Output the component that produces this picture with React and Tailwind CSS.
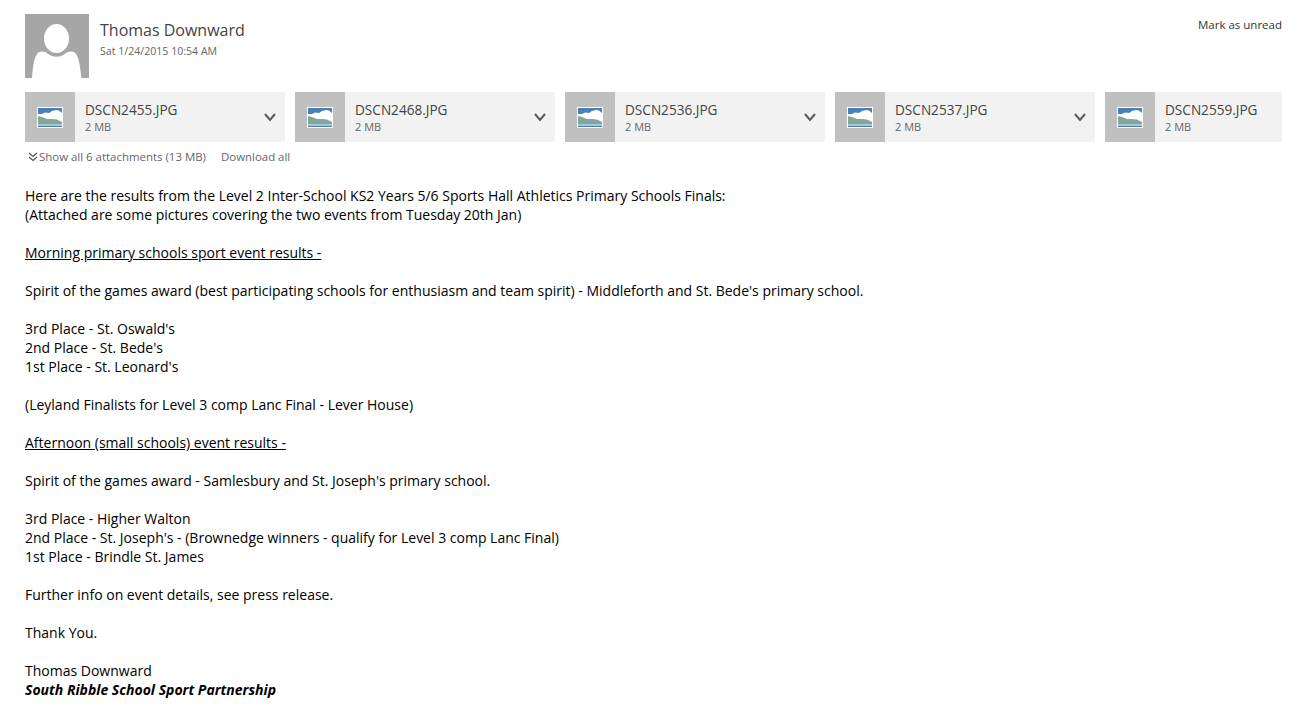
const files = ["DSCN2455.JPG", "DSCN2468.JPG", "DSCN2536.JPG", "DSCN2537.JPG"];
const segoe = { fontFamily: '"Open Sans", "Noto Sans", sans-serif' };

function Thumb() {
  return (
    <div className="w-[50px] h-[50px] shrink-0 bg-[#c0c0c0] flex items-center justify-center">
      <svg width="26" height="21" viewBox="0 0 26 21">
        <rect width="26" height="21" fill="#fff" />
        <rect x="1" y="1" width="24" height="17" fill="#4a7fb8" />
        <path d="M1 7 L5 7 L8 5.5 L12 6 L15 4 L19 3 L22 3.5 L25 6 L25 16 L1 16Z" fill="#fff" />
        <path d="M1 9 L5 10 L10 12 L15 12 L20 12.5 L25 15 L25 17.5 L1 17.5Z" fill="#7fa89a" />
        <rect x="1" y="17.5" width="24" height="1" fill="#fff" />
        <rect x="1" y="18.5" width="24" height="1.5" fill="#4a7fb8" />
      </svg>
    </div>
  );
}

function Tile({ name, chevron = true, last = false }) {
  return (
    <div className={`flex h-[50px] bg-[#f2f2f2] ${last ? "flex-1" : "w-[260px]"}`}>
      <Thumb />
      <div className="pl-[10px] pt-[9px] flex-1">
        <div className="text-[13.6px] leading-[18px] text-[#444]">{name}</div>
        <div className="text-[11px] leading-[15px] text-[#666]">2 MB</div>
      </div>
      {chevron && (
        <div className="w-[21px] flex items-center justify-start">
          <svg width="12" height="9" viewBox="0 0 12 9" fill="none" stroke="#5f5a55" strokeWidth="2">
            <path d="M1 1 L6 7 L11 1" />
          </svg>
        </div>
      )}
    </div>
  );
}

const lines = [
  "Here are the results from the Level 2 Inter-School KS2 Years 5/6 Sports Hall Athletics Primary Schools Finals:",
  "(Attached are some pictures covering the two events from Tuesday 20th Jan)",
  "",
  { u: "Morning primary schools sport event results -" },
  "",
  "Spirit of the games award (best participating schools for enthusiasm and team spirit) - Middleforth and St. Bede's primary school.",
  "",
  "3rd Place - St. Oswald's",
  "2nd Place - St. Bede's",
  "1st Place - St. Leonard's",
  "",
  "(Leyland Finalists for Level 3 comp Lanc Final - Lever House)",
  "",
  { u: "Afternoon (small schools) event results -" },
  "",
  "Spirit of the games award - Samlesbury and St. Joseph's primary school.",
  "",
  "3rd Place - Higher Walton",
  "2nd Place - St. Joseph's - (Brownedge winners - qualify for Level 3 comp Lanc Final)",
  "1st Place - Brindle St. James",
  "",
  "Further info on event details, see press release.",
  "",
  "Thank You.",
  "",
  "Thomas Downward",
  { b: "South Ribble School Sport Partnership" },
];

export default function App() {
  return (
    <div className="w-[1297px] h-[706px] overflow-hidden bg-white pl-[25px] pr-[15px] pt-[14px]" style={segoe}>
      <div className="flex">
        <div className="w-[64px] h-[64px] bg-[#a6a6a6] shrink-0">
          <svg width="64" height="64" viewBox="0 0 64 64">
            <ellipse cx="31.5" cy="24.5" rx="12.5" ry="14.5" fill="#fff" />
            <path d="M7 64 C8 52 9 44 12 40 C15 36.5 20 37 24 40.5 C28 43.5 35 43.5 39 40.5 C43 37 48 36.5 51 40 C54 44 55 52 56.5 64Z" fill="#fff" />
          </svg>
        </div>
        <div className="pl-[11px] pt-[4px] flex-1">
          <div className="text-[16px] leading-[24px] text-[#444]">Thomas Downward</div>
          <div className="text-[10.6px] leading-[16px] text-[#666] mt-[1px]">Sat 1/24/2015 10:54 AM</div>
        </div>
        <div className="text-[11.5px] leading-[22px] text-[#333] font-medium">Mark as unread</div>
      </div>

      <div className="flex gap-[10px] mt-[14px]">
        {files.map((f) => <Tile key={f} name={f} />)}
        <Tile name="DSCN2559.JPG" chevron={false} last />
      </div>

      <div className="flex items-center mt-[6px] pl-[3px] text-[11.45px] leading-[18px] text-[#666]">
        <svg width="10" height="10" viewBox="0 0 10 10" fill="none" stroke="#555" strokeWidth="1.3" className="mr-[1px]">
          <path d="M1 1 L5 4.5 L9 1 M1 5 L5 8.5 L9 5" />
        </svg>
        <span>Show all 6 attachments (13 MB)</span>
        <span className="ml-[15px]">Download all</span>
      </div>

      <div className="mt-[20px] text-[14px] leading-[19px] text-black">
        {lines.map((l, i) => {
          if (l === "") return <div key={i} className="h-[19px]" />;
          if (l.u) return <div key={i} className="underline">{l.u}</div>;
          if (l.b) return <div key={i} className="font-bold italic">{l.b}</div>;
          return <div key={i}>{l}</div>;
        })}
      </div>
    </div>
  );
}
